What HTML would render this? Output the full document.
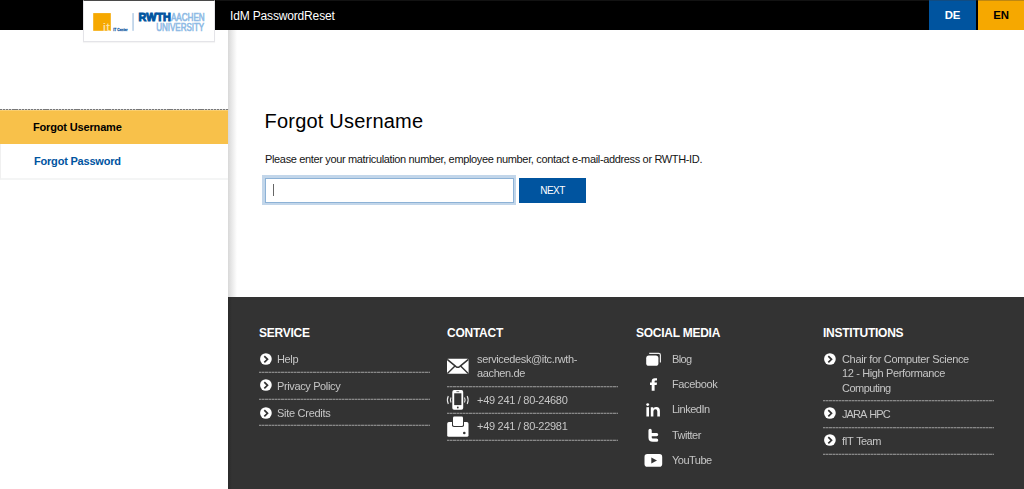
<!DOCTYPE html>
<html><head><meta charset="utf-8">
<style>
*{box-sizing:border-box;margin:0;padding:0}
html,body{width:1024px;height:489px;overflow:hidden;background:#fff;font-family:"Liberation Sans",sans-serif;}
#top{position:absolute;left:0;top:0;width:1024px;height:30px;background:#000;}
#title{position:absolute;left:230px;top:7.5px;color:#fff;font-size:12px;line-height:16px;letter-spacing:-0.16px;white-space:nowrap;}
#logo{position:absolute;left:83px;top:0;width:132px;height:42px;background:#fff;border:1px solid #e4e4e8;border-top:1px solid #4a4a4a;box-shadow:0 1px 1px rgba(0,0,0,0.04);}
#de{position:absolute;left:929px;top:0;width:47px;height:30px;background:#00549f;color:#fff;font-weight:bold;font-size:11.4px;text-align:center;line-height:30.5px;letter-spacing:-0.1px;}
#en{position:absolute;left:978px;top:0;width:46px;height:30px;background:#f6a800;color:#000;font-weight:bold;font-size:11.4px;text-align:center;line-height:30.5px;letter-spacing:-0.1px;}
#shadow{position:absolute;left:228px;top:30px;width:9px;height:268px;background:linear-gradient(to right,#d8d8d8,#fff);}
#nav{position:absolute;left:0;top:109px;width:228px;}
#nav .a{height:35px;background:linear-gradient(to bottom,#fbd580,#f8c14a 1.5px) 0 1px/228px 34px no-repeat,repeating-linear-gradient(to right,#787878 0,#787878 2.2px,#d0d0d0 2.2px,#d0d0d0 3.1px) 0 0/229px 1px no-repeat;width:229px;clip-path:none;color:#000;font-weight:bold;font-size:11px;line-height:36px;padding-left:33px;letter-spacing:-0.16px;}
#nav .b{height:36px;border-bottom:2px solid #f4f5f5;border-left:1px solid #f0f0f0;color:#00549f;font-weight:bold;font-size:11px;line-height:35.5px;padding-left:33px;letter-spacing:-0.2px;}
h1{position:absolute;left:264.5px;top:108.5px;font-size:20px;font-weight:normal;color:#000;line-height:24px;letter-spacing:0.21px;white-space:nowrap;}
#p{position:absolute;left:265px;top:152px;font-size:11px;color:#151515;line-height:14px;letter-spacing:-0.347px;white-space:nowrap;}
#inp{position:absolute;left:265px;top:178px;width:249px;height:25px;border:1px solid #8db2d6;background:#fff;box-shadow:-3px -3px 0 0 #c2d6ea,2px 2px 0 0 #c2d6ea,-3px 2px 0 0 #c2d6ea,2px -3px 0 0 #c2d6ea;}
#inp i{position:absolute;left:6.5px;top:5px;width:1.5px;height:12px;background:#666;}
#btn{position:absolute;left:519px;top:178px;width:67px;height:24.5px;background:#00549f;color:#fff;font-size:10px;text-align:center;line-height:25px;letter-spacing:-0.5px;}
#foot{position:absolute;left:228px;top:297px;width:796px;height:192px;background:linear-gradient(to right,#2a2a2a,#333 4px);}
#fc{position:absolute;left:0;top:0;}
#fc h3{position:absolute;top:325.5px;font-size:12px;color:#fff;font-weight:bold;line-height:14px;white-space:nowrap;letter-spacing:-0.25px;}
.t{position:absolute;font-size:11px;line-height:14px;color:#c6c6c6;will-change:transform;white-space:nowrap;letter-spacing:-0.37px;}
.dl{position:absolute;height:2px;background:repeating-linear-gradient(to right,#888 0,#888 2.2px,#606060 2.2px,#606060 3.2px) 0 0/100% 1px no-repeat,repeating-linear-gradient(to right,#4c4c4c 0,#4c4c4c 2.2px,#414141 2.2px,#414141 3.2px) 0 1px/100% 1px no-repeat;}
.dl.r{background:repeating-linear-gradient(to right,#4c4c4c 0,#4c4c4c 2.2px,#414141 2.2px,#414141 3.2px) 0 0/100% 1px no-repeat,repeating-linear-gradient(to right,#888 0,#888 2.2px,#606060 2.2px,#606060 3.2px) 0 1px/100% 1px no-repeat;}
.chev{position:absolute;width:12px;height:12px;overflow:visible;}
.ic{position:absolute;overflow:visible;}
</style></head><body>
<div id="top"></div>
<div id="title">IdM PasswordReset</div>
<div id="logo"><svg width="133" height="42" viewBox="83 0 133 42" style="position:absolute;left:-1px;top:-1px">
<rect x="93.2" y="13.1" width="17.6" height="17.7" fill="#f6a800"/>
<text x="102.8" y="30.9" font-family="Liberation Sans" font-size="10.4" fill="#fce3b0" textLength="7.4" lengthAdjust="spacingAndGlyphs">it</text>
<text x="113.3" y="30.8" font-family="Liberation Sans" font-weight="bold" font-size="4.1" fill="#1f62a8" stroke="#1f62a8" stroke-width="0.3" textLength="14.3" lengthAdjust="spacingAndGlyphs">IT Center</text>
<rect x="132.4" y="13.1" width="1.3" height="17.7" fill="#a9c5e2"/>
<text x="138.6" y="21.4" font-family="Liberation Sans" font-weight="bold" font-size="11.3" fill="#00549f" stroke="#00549f" stroke-width="1.0" stroke-linejoin="miter" textLength="32.2" lengthAdjust="spacingAndGlyphs">RWTH</text>
<text x="170.9" y="21.4" font-family="Liberation Sans" font-size="11.3" fill="#8ebae5" stroke="#8ebae5" stroke-width="0.65" textLength="33.8" lengthAdjust="spacingAndGlyphs">AACHEN</text>
<text x="156.2" y="30.9" font-family="Liberation Sans" font-size="11.3" fill="#8ebae5" stroke="#8ebae5" stroke-width="0.65" textLength="48" lengthAdjust="spacingAndGlyphs">UNIVERSITY</text>
</svg></div>
<div id="de">DE</div><div id="en">EN</div>
<div style="position:absolute;left:216px;top:0;width:808px;height:1px;background:rgba(60,60,60,0.3)"></div>
<div id="shadow"></div>
<div id="nav"><div class="a">Forgot Username</div><div class="b">Forgot Password</div></div>
<h1>Forgot Username</h1>
<div id="p">Please enter your matriculation number, employee number, contact e-mail-address or RWTH-ID.</div>
<div id="inp"><i></i></div>
<div id="btn">NEXT</div>
<div id="foot"></div>
<div id="fc">
<h3 style="left:259px">SERVICE</h3>
<h3 style="left:447px">CONTACT</h3>
<h3 style="left:636px">SOCIAL MEDIA</h3>
<h3 style="left:823px">INSTITUTIONS</h3>
<!-- service -->
<svg class="chev" viewBox="0 0 12 12" style="left:259.6px;top:352.8px"><circle cx="5.9" cy="6" r="5.85" fill="#fff"/><path d="M4.3 3.2 L7.5 6.3 L4.3 9.4" fill="none" stroke="#333" stroke-width="1.7"/></svg><div class="t" style="left:277px;top:352.2px">Help</div>
<div class="dl r" style="left:259px;top:371px;width:171px"></div>
<svg class="chev" viewBox="0 0 12 12" style="left:259.6px;top:379.4px"><circle cx="5.9" cy="6" r="5.85" fill="#fff"/><path d="M4.3 3.2 L7.5 6.3 L4.3 9.4" fill="none" stroke="#333" stroke-width="1.7"/></svg><div class="t" style="left:277px;top:378.8px">Privacy Policy</div>
<div class="dl r" style="left:259px;top:398px;width:171px"></div>
<svg class="chev" viewBox="0 0 12 12" style="left:259.6px;top:406.5px"><circle cx="5.9" cy="6" r="5.85" fill="#fff"/><path d="M4.3 3.2 L7.5 6.3 L4.3 9.4" fill="none" stroke="#333" stroke-width="1.7"/></svg><div class="t" style="left:277px;top:406px;letter-spacing:-0.28px">Site Credits</div>
<div class="dl r" style="left:259px;top:424px;width:171px"></div>
<!-- contact -->
<div class="t" style="left:477.3px;top:352.2px">servicedesk@itc.rwth-<br>aachen.de</div>
<div class="dl" style="left:447px;top:386px;width:171px"></div>
<div class="t" style="left:477.3px;top:393.2px;letter-spacing:-0.29px">+49 241 / 80-24680</div>
<div class="dl r" style="left:447px;top:412px;width:171px"></div>
<div class="t" style="left:477.3px;top:419.2px;letter-spacing:-0.29px">+49 241 / 80-22981</div>
<div class="dl r" style="left:447px;top:439px;width:171px"></div>
<!-- social -->
<div class="t" style="left:671.5px;top:351.5px;letter-spacing:-0.6px">Blog</div>
<div class="t" style="left:671.5px;top:376.8px">Facebook</div>
<div class="t" style="left:671.5px;top:402.3px;letter-spacing:-0.5px">LinkedIn</div>
<div class="t" style="left:671.5px;top:427.9px;letter-spacing:-0.5px">Twitter</div>
<div class="t" style="left:671.5px;top:453.2px;letter-spacing:-0.5px">YouTube</div>
<!-- contact icons -->
<svg class="ic" style="left:446px;top:357px" width="24" height="18" viewBox="446 357 24 18">
<rect x="447" y="358.8" width="21.6" height="15" rx="1.2" fill="#fff"/>
<path d="M447.2 359.4 L456 366.6 Q457.8 368 459.6 366.6 L468.4 359.4" fill="none" stroke="#333" stroke-width="1.5"/>
<path d="M447.4 373.6 L455 366 M468.2 373.6 L460.6 366" fill="none" stroke="#333" stroke-width="1.4"/>
</svg>
<svg class="ic" style="left:446px;top:389px" width="24" height="22" viewBox="446 389 24 22">
<rect x="452.3" y="390.1" width="10.9" height="19.6" rx="1.8" fill="#fff"/>
<rect x="454.2" y="393.3" width="7.2" height="11.8" fill="#333"/>
<rect x="456.4" y="391.3" width="2.8" height="0.8" fill="#555"/>
<circle cx="457.8" cy="407.5" r="0.9" fill="#333"/>
<path d="M448.3 396 Q446.4 400 448.3 404 M451 397.6 Q449.8 400 451 402.4 M467.2 396 Q469.1 400 467.2 404 M464.5 397.6 Q465.7 400 464.5 402.4" fill="none" stroke="#e8e8e8" stroke-width="1.1"/>
</svg>
<svg class="ic" style="left:446px;top:415px" width="24" height="23" viewBox="446 415 24 23">
<rect x="447.2" y="422.1" width="21.3" height="14.7" rx="1.6" fill="#fff"/>
<rect x="452" y="415.6" width="12" height="11.4" rx="1.8" fill="#333"/>
<rect x="453" y="416.5" width="10" height="9.4" rx="1.2" fill="#fff"/>
<circle cx="464.3" cy="433" r="1.3" fill="#333"/>
</svg>
<!-- social icons -->
<svg class="ic" style="left:644px;top:350px" width="20" height="18" viewBox="644 350 20 18">
<rect x="646.2" y="355.6" width="12.2" height="10.2" rx="2.6" fill="#fff"/>
<path d="M649.2 353.3 L658.6 353.3 Q660.4 353.3 660.4 355.1 L660.4 362.6" fill="none" stroke="#ececec" stroke-width="1.15"/>
</svg>
<svg class="ic" style="left:648px;top:377px" width="12" height="15" viewBox="648 377 12 15">
<path d="M651.7 390.8 L651.7 384.9 L650 384.9 L650 382.5 L651.7 382.5 L651.7 381.2 Q651.7 378.2 654.8 378.2 L657 378.2 L657 380.5 L655.6 380.5 Q654.6 380.5 654.6 381.5 L654.6 382.5 L657 382.5 L656.7 384.9 L654.6 384.9 L654.6 390.8 Z" fill="#fff"/>
</svg>
<svg class="ic" style="left:645px;top:402px" width="17" height="16" viewBox="645 402 17 16">
<circle cx="647.7" cy="404.6" r="1.45" fill="#fff"/>
<rect x="646.4" y="407.2" width="2.6" height="9.3" fill="#fff"/>
<path d="M650.8 416.5 L650.8 407.2 L653.3 407.2 L653.3 408.4 Q654.3 407 656.4 407 Q659.9 407 659.9 411 L659.9 416.5 L657.3 416.5 L657.3 411.5 Q657.3 409.3 655.4 409.3 Q653.4 409.3 653.4 411.6 L653.4 416.5 Z" fill="#fff"/>
</svg>
<svg class="ic" style="left:647px;top:427px" width="13" height="16" viewBox="647 427 13 16">
<path d="M650.1 430.4 L650.1 437.5 Q650.1 440.2 652.8 440.2 L656.6 440.2 M650.1 434.6 L656.6 434.6" fill="none" stroke="#fff" stroke-width="3.3" stroke-linecap="round" stroke-linejoin="round"/>
</svg>
<svg class="ic" style="left:643px;top:453px" width="21" height="15" viewBox="643 453 21 15">
<rect x="644.5" y="454.1" width="17.7" height="12.6" rx="2.8" fill="#fff"/>
<path d="M651.3 457.6 L657 460.5 L651.3 463.4 Z" fill="#333"/>
</svg>
<!-- institutions -->
<svg class="chev" viewBox="0 0 12 12" style="left:824px;top:353px"><circle cx="5.9" cy="6" r="5.85" fill="#fff"/><path d="M4.3 3.2 L7.5 6.3 L4.3 9.4" fill="none" stroke="#333" stroke-width="1.7"/></svg><div class="t" style="left:841.8px;top:351.7px;line-height:14.4px"><span style="letter-spacing:-0.34px">Chair for Computer Science</span><br>12 - High Performance<br><span style="letter-spacing:-0.5px">Computing</span></div>
<div class="dl" style="left:823px;top:400px;width:171px"></div>
<svg class="chev" viewBox="0 0 12 12" style="left:824px;top:407.2px"><circle cx="5.9" cy="6" r="5.85" fill="#fff"/><path d="M4.3 3.2 L7.5 6.3 L4.3 9.4" fill="none" stroke="#333" stroke-width="1.7"/></svg><div class="t" style="left:841.8px;top:407.1px;letter-spacing:-0.93px;word-spacing:1.3px">JARA HPC</div>
<div class="dl" style="left:823px;top:427px;width:171px"></div>
<svg class="chev" viewBox="0 0 12 12" style="left:824px;top:434.2px"><circle cx="5.9" cy="6" r="5.85" fill="#fff"/><path d="M4.3 3.2 L7.5 6.3 L4.3 9.4" fill="none" stroke="#333" stroke-width="1.7"/></svg><div class="t" style="left:841.8px;top:433.6px;letter-spacing:-0.6px;word-spacing:1.1px">fIT Team</div>
<div class="dl r" style="left:823px;top:453px;width:171px"></div>
</div>

</body></html>
